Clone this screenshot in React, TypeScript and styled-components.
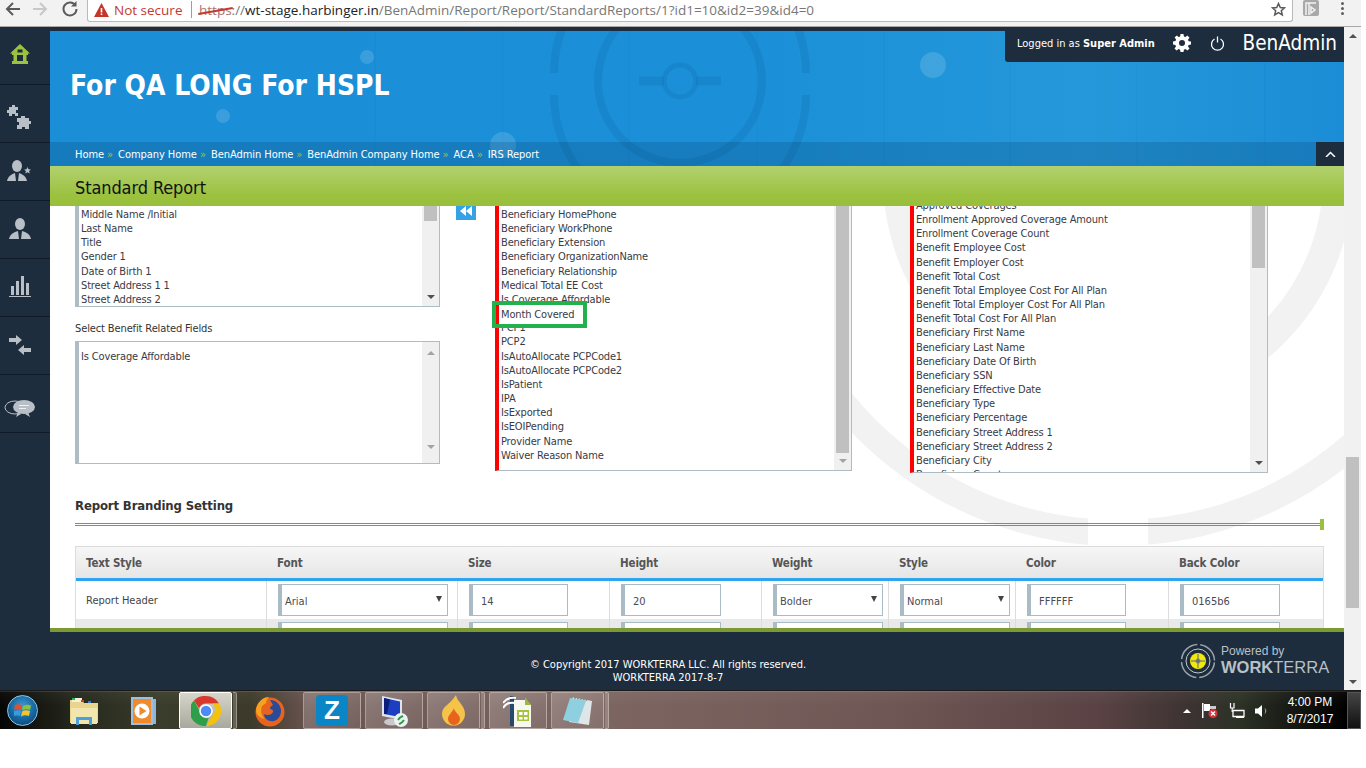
import styled, { createGlobalStyle } from 'styled-components';
import { ReactNode } from 'react';

const uiFont = '"DejaVu Sans Condensed", "DejaVu Sans", sans-serif';

const GlobalStyle = createGlobalStyle`
  html, body {
    margin: 0;
    padding: 0;
    background: #fff;
  }
  body {
    font-family: ${uiFont};
    font-stretch: condensed;
  }
  * {
    box-sizing: border-box;
  }
`;

const leftFields = ['Middle Name /Initial', 'Last Name', 'Title', 'Gender 1', 'Date of Birth 1', 'Street Address 1 1', 'Street Address 2'];

const centerFields = [
  'Beneficiary HomePhone',
  'Beneficiary WorkPhone',
  'Beneficiary Extension',
  'Beneficiary OrganizationName',
  'Beneficiary Relationship',
  'Medical Total EE Cost',
  'Is Coverage Affordable',
  'Month Covered',
  'PCP1',
  'PCP2',
  'IsAutoAllocate PCPCode1',
  'IsAutoAllocate PCPCode2',
  'IsPatient',
  'IPA',
  'IsExported',
  'IsEOIPending',
  'Provider Name',
  'Waiver Reason Name',
];

const rightFields = [
  'Approved Coverages',
  'Enrollment Approved Coverage Amount',
  'Enrollment Coverage Count',
  'Benefit Employee Cost',
  'Benefit Employer Cost',
  'Benefit Total Cost',
  'Benefit Total Employee Cost For All Plan',
  'Benefit Total Employer Cost For All Plan',
  'Benefit Total Cost For All Plan',
  'Beneficiary First Name',
  'Beneficiary Last Name',
  'Beneficiary Date Of Birth',
  'Beneficiary SSN',
  'Beneficiary Effective Date',
  'Beneficiary Type',
  'Beneficiary Percentage',
  'Beneficiary Street Address 1',
  'Beneficiary Street Address 2',
  'Beneficiary City',
  'Beneficiary Country',
];

const crumbs = ['Home', 'Company Home', 'BenAdmin Home', 'BenAdmin Company Home', 'ACA', 'IRS Report'];

const columns = [
  { title: 'Text Style' },
  { title: 'Font', width: 170, value: 'Arial', arrow: true },
  { title: 'Size', width: 99, value: '14' },
  { title: 'Height', width: 100, value: '20' },
  { title: 'Weight', width: 110, value: 'Bolder', arrow: true },
  { title: 'Style', width: 110, value: 'Normal', arrow: true },
  { title: 'Color', width: 99, value: 'FFFFFF' },
  { title: 'Back Color', width: 100, value: '0165b6' },
];

const grey = '#b9bfc6';

// dy: how far the glyph sits off the middle of its 58px row
const navIcons: { dy: number; icon: ReactNode }[] = [
  {
    dy: -2,
    icon: (
      <svg width="24" height="22" viewBox="0 0 24 22" fill="#9ac33f">
        <path d="M12 1 22 10.500H2Z" />
        <path d="M4 10h16v2h-1.500v6H20v3H4v-3h1.500v-6H4Z" />
        <path d="M9 12h6v6H9Z" fill="#1d2d3e" />
        <path d="M9.500 6.500h5v3h-5Z" fill="#1d2d3e" />
      </svg>
    ),
  },
  {
    dy: 3,
    icon: (
      <svg width="28" height="26" viewBox="0 0 28 26" fill={grey}>
        <path d="M3 3h3V1h3v2h3v3h-2v3h2v3H9v-2H6v2H3V9H1V6h2Z" />
        <path d="M11 14h4v-2h4v2h4v3h2v3h-2v5h-4v-2h-3v2h-5v-4h2v-3h-2Z" />
      </svg>
    ),
  },
  {
    dy: -1,
    icon: (
      <svg width="26" height="22" viewBox="0 0 26 22" fill={grey}>
        <ellipse cx="10" cy="6" rx="5" ry="6" />
        <path d="M0 21c1-5 5-7 8-8l1 8Z" />
        <path d="M20 21c-1-5-5-7-8-8l-1 8Z" />
        <path d="M20.500 7l1 2.300 2.500.2-1.900 1.600.6 2.400-2.200-1.300-2.200 1.300.6-2.400-1.900-1.600 2.500-.2Z" />
      </svg>
    ),
  },
  {
    dy: -1,
    icon: (
      <svg width="22" height="22" viewBox="0 0 22 22" fill={grey}>
        <ellipse cx="11" cy="6" rx="5" ry="6" />
        <path d="M0 21c1-5 5-7 9-8l1 8Z" />
        <path d="M22 21c-1-5-5-7-9-8l-1 8Z" />
      </svg>
    ),
  },
  {
    dy: -1,
    icon: (
      <svg width="22" height="22" viewBox="0 0 22 22" fill={grey}>
        <path d="M2 10h3v9H2ZM7 5h3v14H7ZM12 0h3v19h-3ZM17 7h3v12h-3ZM0 20h22v1H0Z" />
      </svg>
    ),
  },
  {
    dy: -1,
    icon: (
      <svg width="22" height="20" viewBox="0 0 22 20" fill={grey}>
        <path d="M0 3h7V0l6 5-6 5V7H0Z" />
        <path d="M22 13h-7v-3l-6 5 6 5v-3h7Z" />
      </svg>
    ),
  },
  {
    dy: 5,
    icon: (
      <svg width="32" height="18" viewBox="0 0 32 18" fill="none">
        <ellipse cx="11" cy="7.500" rx="10" ry="6.500" stroke={grey} strokeWidth="1" />
        <ellipse cx="20" cy="7" rx="11" ry="7" fill={grey} />
        <path d="M14 12l-2 5 5-3ZM24 12l2 5-5-3Z" fill={grey} />
        <path d="M15 5.500h10M15 8.500h7" stroke="#eef1f3" strokeWidth="1" />
      </svg>
    ),
  },
];

export default function App() {
  return (
    <>
      <GlobalStyle />
      <Page>
        <BrowserBar>
          <svg width="20" height="20" viewBox="0 0 20 20" fill="none" stroke="#5a5a5a" strokeWidth="2">
            <path d="M17 9H4M10 3 4 9l6 6" />
          </svg>
          <ForwardIcon width="20" height="20" viewBox="0 0 20 20" fill="none" stroke="#c8c8c8" strokeWidth="2">
            <path d="M2 9h13M9 3l6 6-6 6" />
          </ForwardIcon>
          <ReloadIcon width="18" height="18" viewBox="0 0 18 18" fill="none" stroke="#5a5a5a" strokeWidth="2">
            <path d="M14.500 5.500A6.500 6.500 0 1 0 15.500 9" />
            <path d="M15.500 1v5.500H10" fill="#5a5a5a" stroke="none" />
          </ReloadIcon>
          <Omnibox>
            <svg width="15" height="14" viewBox="0 0 15 14">
              <path d="M7.500 0 15 14H0Z" fill="#c5352a" />
              <path d="M6.700 5h1.600v4.500H6.700ZM6.700 10.500h1.600V12H6.700Z" fill="#fff" />
            </svg>
            <NotSecure>Not secure</NotSecure>
            <OmniDivider />
            <Url>
              <Scheme>https</Scheme>
              ://<UrlHost>wt-stage.harbinger.in</UrlHost>/BenAdmin/Report/Report/StandardReports/1?id1=10&amp;id2=39&amp;id4=0
            </Url>
            <svg width="15" height="15" viewBox="0 0 15 15" fill="none" stroke="#5a5a5a" strokeWidth="1.500">
              <path d="M7.500 1.500 9.300 5.500l4.200.4-3.200 2.800 1 4.200-3.800-2.200-3.800 2.200 1-4.200L1.500 5.900l4.200-.4Z" />
            </svg>
          </Omnibox>
          <ExtensionBadge>
            <svg width="12" height="13" viewBox="0 0 12 13" fill="none" stroke="#f2f2f2" strokeWidth="1.500">
              <path d="M11 1H1v12M4 1v12" />
              <path d="M6 5l4 3-4 3Z" />
            </svg>
          </ExtensionBadge>
          <MenuDots>
            <i />
            <i />
            <i />
          </MenuDots>
        </BrowserBar>

        <Viewport>
          <Sidebar>
            {navIcons.map((item, i) => (
              <NavItem key={i} $dy={item.dy}>
                {item.icon}
              </NavItem>
            ))}
          </Sidebar>

          <Main>
            <TopStrip />
            <UserBox>
              <UserText>
                Logged in as <b>Super Admin</b>
              </UserText>
              <svg width="18" height="18" viewBox="0 0 18 18" fill="#fff">
                <path
                  fillRule="evenodd"
                  d="M7.500 0h3l.4 2.500 1.500.6 2-1.500 2.100 2.100-1.500 2 .6 1.500 2.400.4v3l-2.400.4-.6 1.500 1.500 2-2.100 2.100-2-1.500-1.500.6-.4 2.300h-3l-.4-2.300-1.500-.6-2 1.500-2.100-2.100 1.500-2-.6-1.500L0 10.500v-3l2.500-.4.600-1.500-1.500-2 2.100-2.100 2 1.500 1.500-.6ZM9 6a3 3 0 1 0 0 6 3 3 0 0 0 0-6Z"
                />
              </svg>
              <PowerIcon width="15" height="15" viewBox="0 0 15 15" fill="none" stroke="#fff" strokeWidth="1.300">
                <path d="M4.500 3A6 6 0 1 0 10.500 3" />
                <path d="M7.500 0.500v6" />
              </PowerIcon>
              <AppName>BenAdmin</AppName>
            </UserBox>

            <Hero>
              <HeroArt width="1294" height="135" viewBox="0 0 1294 135" fill="none">
                {[325, 453, 579, 707, 834, 960, 1087, 1215].map((x) => (
                  <path key={x} d="M0 0v135" transform={`translate(${x} 0)`} stroke="#1578b8" strokeOpacity=".14" />
                ))}
                <g stroke="#1679bd" strokeOpacity=".42">
                  <circle cx="630" cy="50" r="16" strokeWidth="5" />
                  <circle cx="630" cy="50" r="82" strokeWidth="8" />
                  <path d="M589 50h25M646 50h25" strokeWidth="9" />
                  <path d="M504 42A126 126 0 0 1 756 42M504 64A126 126 0 0 0 756 64" strokeWidth="8" />
                </g>
                <g fill="#fff" fillOpacity=".14">
                  <circle cx="317" cy="26" r="7" />
                  <circle cx="173" cy="85" r="7" />
                  <circle cx="453" cy="114" r="13" />
                  <circle cx="883" cy="34" r="13" />
                </g>
              </HeroArt>
              <HeroTitle>For QA LONG For HSPL</HeroTitle>
              <Breadcrumbs>
                {crumbs.map((c, i) => (
                  <Crumb key={c}>
                    {c}
                    {i < crumbs.length - 1 && <CrumbSep>»</CrumbSep>}
                  </Crumb>
                ))}
                <CollapseButton>
                  <svg width="11" height="6" viewBox="0 0 11 6" fill="none" stroke="#fff" strokeWidth="1.500">
                    <path d="M1 6l4.500-4.500L10 6" />
                  </svg>
                </CollapseButton>
              </Breadcrumbs>
            </Hero>

            <TitleBar>Standard Report</TitleBar>

            <Content>
              <Watermark width="1294" height="422" viewBox="0 0 1294 422" fill="none" stroke="#f2f2f2">
                <circle cx="1068" cy="-29" r="356" strokeWidth="26" />
                <circle cx="1068" cy="-29" r="220" strokeWidth="30" />
                <path d="M1038 280h60v80h-60Z" fill="#fff" stroke="none" />
              </Watermark>

              <Columns>
                <LeftColumn>
                  <ListBox $h={101} $edge="#aebcc4">
                    <List>
                      {leftFields.map((f) => (
                        <li key={f}>{f}</li>
                      ))}
                    </List>
                    <Track>
                      <Thumb $h={15} />
                      <Arrow />
                    </Track>
                  </ListBox>
                  <FieldLabel>Select Benefit Related Fields</FieldLabel>
                  <ListBox $h={123} $edge="#aebcc4" $closed>
                    <List $top={8}>
                      <li>Is Coverage Affordable</li>
                    </List>
                    <Track $between>
                      <Arrow $up $faint />
                      <Arrow $faint />
                    </Track>
                  </ListBox>
                </LeftColumn>

                <MoveButton>
                  <svg width="14" height="12" viewBox="0 0 14 12" fill="#fff">
                    <path d="M7 0v10L1 5ZM13 0v10L7 5Z" />
                  </svg>
                </MoveButton>

                <CenterColumn>
                  <ListBox $h={265} $edge="#f00">
                    <List>
                      {centerFields.map((f) => (
                        <li key={f}>{f}</li>
                      ))}
                    </List>
                    <Track>
                      <Thumb $h={247} />
                      <Arrow $faint />
                    </Track>
                  </ListBox>
                  <Callout>Month Covered</Callout>
                </CenterColumn>

                <RightColumn>
                  <ListBox $h={267} $edge="#f00">
                    <List $top={-7}>
                      {rightFields.map((f) => (
                        <li key={f}>{f}</li>
                      ))}
                    </List>
                    <Track>
                      <Thumb $h={62} />
                      <Arrow />
                    </Track>
                  </ListBox>
                </RightColumn>
              </Columns>

              <SectionTitle>Report Branding Setting</SectionTitle>
              <SectionRule />

              <BrandingTable>
                <HeaderRow>
                  {columns.map((c) => (
                    <HeaderCell key={c.title}>{c.title}</HeaderCell>
                  ))}
                </HeaderRow>
                <BodyRow>
                  {columns.map((c) => (
                    <BodyCell key={c.title}>
                      {c.width ? (
                        <Field $w={c.width} $pad={c.arrow ? 3 : 8}>
                          {c.value}
                          {c.arrow && <Caret />}
                        </Field>
                      ) : (
                        'Report Header'
                      )}
                    </BodyCell>
                  ))}
                </BodyRow>
                <BodyRow $shaded>
                  {columns.map((c) => (
                    <BodyCell key={c.title}>{c.width && <Field $w={c.width} $pad={8} />}</BodyCell>
                  ))}
                </BodyRow>
              </BrandingTable>
            </Content>

            <Footer>
              <Copyright>
                © Copyright 2017 WORKTERRA LLC. All rights reserved.
                <br />
                WORKTERRA 2017-8-7
              </Copyright>
              <PoweredBy>
                <svg width="36" height="36" viewBox="0 0 36 36" fill="none">
                  <circle cx="18" cy="18" r="16.500" stroke="#9aa3ab" strokeWidth="1.500" strokeDasharray="23 3" strokeDashoffset="-1.500" />
                  <circle cx="18" cy="18" r="12" stroke="#c4c8cb" strokeWidth="1" />
                  <circle cx="18" cy="18" r="8" fill="#f2e70f" />
                  <circle cx="18" cy="18" r="2.500" fill="#8a8f70" />
                  <path d="M18 11v14M11 18h14" stroke="#5d6470" strokeWidth="1" />
                </svg>
                <PoweredText>
                  <small>Powered by</small>
                  <Brand>
                    <b>WORK</b>TERRA
                  </Brand>
                </PoweredText>
              </PoweredBy>
            </Footer>
          </Main>

          <PageScrollbar>
            <PageArrow $up />
            <PageThumb />
            <PageArrow />
          </PageScrollbar>
        </Viewport>

        <Taskbar>
          <StartOrb>
            <svg width="18" height="16" viewBox="0 0 18 16">
              <path d="M1 2c2.500-1 5-1 7 .5L7 7C5 6 3 6 0 7Z" fill="#e0502e" />
              <path d="M9 3c2-1 5-2 8-.5L16 7c-3-1-5-1-8 .5Z" fill="#8cc23c" />
              <path d="M0 8c3-1 5-1 7 0l-1 5c-2-1-4-1-7 .5Z" fill="#3a9ae0" />
              <path d="M8 8.500c3-1.500 5-1.500 8-.5l-1 5c-3-1-5-1-8 .5Z" fill="#f2c52e" />
            </svg>
          </StartOrb>
          <PlainSlot $w={56}>
            <svg width="32" height="30" viewBox="0 0 32 30">
              <path d="M2 4h12l2 3h14v20H2Z" fill="#e8d48c" />
              <path d="M4 2h10v4H4Z" fill="#f5f0d8" />
              <path d="M4 2h3v2H4Z" fill="#2db34a" />
              <path d="M13 4h3v2h-3Z" fill="#d63a2f" />
              <path d="M20 5h3v2h-3Z" fill="#2f7fd6" />
              <path d="M3 12h26v16H3Z" fill="#f2e6b0" />
              <path d="M8 21h16v8h-3v-5H11v5H8Z" fill="#4aa0d8" />
            </svg>
          </PlainSlot>
          <PlainSlot $w={63}>
            <svg width="28" height="30" viewBox="0 0 28 30">
              <path d="M6 3h20v25H6Z" fill="#8fb6d8" />
              <path d="M2 2h20v26H2Z" fill="#f08a2c" stroke="#9cc0de" strokeWidth="2" />
              <circle cx="12" cy="15" r="7.500" fill="#fff" />
              <path d="M9.500 10.500v9l7-4.500Z" fill="#f08a2c" />
            </svg>
          </PlainSlot>
          <TaskButton $w={53} $active>
            <svg width="30" height="30" viewBox="0 0 30 30">
              <path d="M15 0a15 15 0 0 1 13 7.500H15a7.500 7.500 0 0 0-7 4.800L3 4.500A15 15 0 0 1 15 0Z" fill="#d8392b" />
              <path d="M28 7.500A15 15 0 0 1 15 30l6.500-11a7.500 7.500 0 0 0 0-11.500Z" fill="#f4c20d" />
              <path d="M3 4.500l5.500 10a7.500 7.500 0 0 0 9 7.500L15 30A15 15 0 0 1 3 4.500Z" fill="#2f9e48" />
              <circle cx="15" cy="15" r="6" fill="#4c8bf5" stroke="#fff" strokeWidth="1.500" />
            </svg>
          </TaskButton>
          <Sliver />
          <PlainSlot $w={62} $pl={4}>
            <svg width="30" height="32" viewBox="0 0 30 32">
              <circle cx="15" cy="17" r="14.500" fill="#e8641e" />
              <path d="M15 5a11 11 0 0 1 11 11c0 5-3 9-7 10-5 1-10-2-10-7 3 2 8 1 9-2 1-2-2-3-3-3 0-2 1-3 3-4-1-2-2-3-3-5Z" fill="#2a4a9a" />
              <path d="M1 15c1-7 6-13 13-13-2 2-3 4-3 6l-4 3c-1 4-2 8 3 13-5-1-9-4-9-9Z" fill="#f6a21c" />
            </svg>
          </PlainSlot>
          <TaskButton $w={58}>
            <ZBadge>Z</ZBadge>
          </TaskButton>
          <TaskButton $w={58}>
            <svg width="30" height="32" viewBox="0 0 30 32">
              <path d="M3 1l20 4v20L3 21Z" fill="#dfe5ee" />
              <path d="M5 3l16 3.500V22L5 19Z" fill="#1c3ec0" />
              <path d="M5 3l6 1.500L8 19H5Z" fill="#0b1d78" />
              <ellipse cx="13" cy="27" rx="8" ry="3.500" fill="#c7c9cc" />
              <circle cx="22" cy="25" r="7" fill="#eef1f2" />
              <path d="M19 25c2-3 3-3 5-4M25 25c-2 3-3 3-5 4" stroke="#2a9a4a" strokeWidth="2" fill="none" />
            </svg>
          </TaskButton>
          <TaskButton $w={53}>
            <svg width="24" height="32" viewBox="0 0 24 32">
              <path d="M14 0c1 7 9 10 9 19a11.500 11.500 0 0 1-23 0C0 11 8 10 14 0Z" fill="#f6c34a" />
              <path d="M12 13c0 4 6 6 6 11a6 6 0 0 1-12 0c0-4 4-6 6-11Z" fill="#e8641e" />
            </svg>
          </TaskButton>
          <Sliver />
          <TaskButton $w={58}>
            <svg width="30" height="34" viewBox="0 0 30 34">
              <path d="M7 2h4v30H7Z" fill="#26486a" />
              <path d="M11 6h12l5 5v22H11Z" fill="#f7f7f2" />
              <path d="M22 3l6 8h-6Z" fill="#9ab83a" />
              <path d="M14 16h12v11H14Z" fill="#a8c23a" />
              <path d="M16 18h3.500v3H16ZM21 18h3.500v3H21ZM16 23h3.500v2.500H16ZM21 23h3.500v2.500H21Z" fill="#fff" />
              <path d="M0 14c3-5 7-6 12-5M0 9c3-4 7-6 13-5" stroke="#fff" strokeWidth="2" fill="none" />
            </svg>
          </TaskButton>
          <TaskButton $w={53}>
            <svg width="32" height="32" viewBox="0 0 32 32">
              <path d="M10 2l20 4-3 24-20-3Z" fill="#dfe6e8" />
              <path d="M8 3l16 3-8 22-15-3Z" fill="#8fd0e0" />
              <path d="M9 2l16 3" stroke="#888" strokeWidth="2" strokeDasharray="2 1" />
            </svg>
          </TaskButton>
          <Sliver />

          <Tray>
            <TrayCaret />
            <svg width="18" height="16" viewBox="0 0 18 16">
              <path d="M1 0h1.500v15H1ZM3 1h6v7H3Z" fill="#fff" />
              <path d="M9 3h6v3H9Z" fill="#c9cdd0" />
              <circle cx="12" cy="10.500" r="4.500" fill="#d8343a" />
              <path d="M10 8.500l4 4M14 8.500l-4 4" stroke="#fff" strokeWidth="1.300" />
            </svg>
            <svg width="16" height="15" viewBox="0 0 16 15" fill="none" stroke="#fff">
              <path d="M4 7.500h11v6H4ZM7 14.500h8" strokeWidth="1.300" />
              <path d="M1.500 0v5M5 0v5M1 5h4.500M3.200 5v4" strokeWidth="1.200" />
            </svg>
            <svg width="13" height="14" viewBox="0 0 13 14" fill="#fff">
              <path d="M0 4.500h3L7 1v12L3 9.500H0Z" />
              <path d="M10 4.500c1 1.500 1 3.500 0 5" fill="none" stroke="#aaa" />
            </svg>
            <Clock>
              4:00 PM
              <br />
              8/7/2017
            </Clock>
            <ShowDesktop />
          </Tray>
        </Taskbar>
      </Page>
    </>
  );
}

const Page = styled.div`
  width: 1361px;
  height: 729px;
  display: flex;
  flex-direction: column;
  overflow: hidden;
`;

const BrowserBar = styled.div`
  height: 27px;
  flex: none;
  display: flex;
  align-items: flex-start;
  padding: 0 0 0 3px;
  background: #f2f2f2;
  border-bottom: 1px solid #a8a8a8;
`;

const ForwardIcon = styled.svg`
  margin-left: 8px;
`;

const ReloadIcon = styled.svg`
  margin: 0 8px 0 10px;
`;

const Omnibox = styled.div`
  width: 1206px;
  height: 22px;
  display: flex;
  align-items: center;
  gap: 5px;
  padding: 0 6px 2px 6px;
  background: #fff;
  border: 1px solid #b9b9b9;
  border-top: none;
  border-radius: 0 0 3px 3px;
  font-family: 'Open Sans', sans-serif;
  font-stretch: normal;
  font-size: 13.500px;
`;

const NotSecure = styled.span`
  color: #c5392e;
  width: 72px;
  white-space: nowrap;
`;

const OmniDivider = styled.span`
  width: 1px;
  height: 17px;
  background: #9d9d9d;
  margin-right: 2px;
`;

const Url = styled.span`
  flex: 1;
  color: #777;
  white-space: nowrap;
`;

const Scheme = styled.span`
  position: relative;
  color: #a9756f;
  &::after {
    content: '';
    position: absolute;
    left: -1px;
    right: -1px;
    top: 9px;
    height: 2px;
    background: #c5392e;
    transform: rotate(-10deg);
  }
`;

const UrlHost = styled.span`
  color: #222;
`;

const ExtensionBadge = styled.div`
  width: 16px;
  height: 16px;
  margin-left: 10px;
  background: #a9a9a9;
  border-radius: 2px;
  display: flex;
  align-items: center;
  justify-content: center;
`;

const MenuDots = styled.div`
  display: flex;
  flex-direction: column;
  gap: 2px;
  margin: 2px 0 0 22px;
  i {
    width: 3px;
    height: 3px;
    background: #5f5f5f;
    border-radius: 50%;
  }
`;

const Viewport = styled.div`
  flex: none;
  height: 663px;
  display: flex;
`;

const Sidebar = styled.div`
  width: 50px;
  flex: none;
  background: #1d2d3e;
`;

const NavItem = styled.div<{ $dy: number }>`
  height: 58px;
  padding-right: 10px;
  display: flex;
  align-items: center;
  justify-content: center;
  border-bottom: 1px solid #111b27;
  > svg {
    margin-top: ${(p) => p.$dy * 2}px;
  }
`;

const Main = styled.div`
  position: relative;
  width: 1294px;
  flex: none;
  display: flex;
  flex-direction: column;
`;

const TopStrip = styled.div`
  height: 4px;
  flex: none;
  background: #1d2d3e;
`;

const UserBox = styled.div`
  position: absolute;
  top: 0;
  right: 0;
  z-index: 3;
  width: 339px;
  height: 35px;
  display: flex;
  align-items: center;
  padding: 0 7px 3px 12px;
  background: #1d2d3e;
  border-bottom-left-radius: 3px;
  color: #fff;
`;

const UserText = styled.span`
  width: 156px;
  font-size: 11px;
  white-space: nowrap;
  b {
    font-weight: 700;
  }
`;

const PowerIcon = styled.svg`
  margin-left: 19px;
`;

const AppName = styled.span`
  margin-left: auto;
  font-size: 20.500px;
`;

const Hero = styled.div`
  position: relative;
  height: 135px;
  flex: none;
  display: flex;
  flex-direction: column;
  overflow: hidden;
  background: linear-gradient(90deg, #1a8ed7 0%, #1b90d8 55%, #2598da 80%, #1b8dd6 100%);
`;

const HeroArt = styled.svg`
  position: absolute;
  inset: 0;
`;

const HeroTitle = styled.h1`
  position: relative;
  flex: 1;
  margin: 0;
  padding: 35px 0 0 20px;
  font-size: 28px;
  line-height: 40px;
  font-weight: 700;
  color: #fff;
`;

const Breadcrumbs = styled.div`
  position: relative;
  height: 24px;
  flex: none;
  display: flex;
  align-items: center;
  padding-left: 25px;
  background: rgba(10, 60, 100, 0.22);
  font-size: 11px;
  letter-spacing: -0.05px;
  color: #fff;
`;

const Crumb = styled.span`
  white-space: nowrap;
`;

const CrumbSep = styled.span`
  margin: 0 5px 0 3px;
  color: #9ac33f;
`;

const CollapseButton = styled.div`
  width: 28px;
  height: 24px;
  margin-left: auto;
  display: flex;
  align-items: center;
  justify-content: center;
  background: #1d2d3e;
`;

const TitleBar = styled.div`
  height: 40px;
  flex: none;
  padding: 10px 0 0 25px;
  background: linear-gradient(180deg, #b2d16e 0%, #9bc13f 75%, #98bf3c 100%);
  font-size: 18px;
  letter-spacing: -0.1px;
  line-height: 24px;
  color: #111;
`;

const Content = styled.div`
  position: relative;
  height: 422px;
  flex: none;
  overflow: hidden;
  padding: 0 20px 0 25px;
  background: #fff;
`;

const Watermark = styled.svg`
  position: absolute;
  inset: 0;
`;

const Columns = styled.div`
  position: relative;
  height: 292px;
  display: flex;
  align-items: flex-start;
`;

const LeftColumn = styled.div`
  width: 365px;
  flex: none;
  display: flex;
  flex-direction: column;
`;

const CenterColumn = styled.div`
  position: relative;
  width: 357px;
  flex: none;
  margin-right: 58px;
`;

const RightColumn = styled.div`
  width: 358px;
  flex: none;
`;

const ListBox = styled.div<{ $h: number; $edge: string; $closed?: boolean }>`
  height: ${(p) => p.$h}px;
  display: flex;
  background: #fff;
  border: 1px solid #aebcc4;
  border-top: ${(p) => (p.$closed ? '1px solid #aebcc4' : 'none')};
  border-left: 4px solid ${(p) => p.$edge};
  overflow: hidden;
`;

const List = styled.ul<{ $top?: number }>`
  flex: 1;
  list-style: none;
  margin: ${(p) => p.$top ?? 2}px 0 0;
  padding: 0 0 0 2px;
  font-size: 11px;
  letter-spacing: -0.15px;
  line-height: 14.150px;
  color: #3a3a44;
  li {
    white-space: nowrap;
  }
`;

const Track = styled.div<{ $between?: boolean }>`
  width: 17px;
  flex: none;
  display: flex;
  flex-direction: column;
  align-items: center;
  justify-content: ${(p) => (p.$between ? 'space-between' : 'flex-start')};
  padding: ${(p) => (p.$between ? '9px 0 7px' : '0')};
  background: #f0f0f0;
`;

const Thumb = styled.div<{ $h: number }>`
  width: 13px;
  height: ${(p) => p.$h}px;
  background: #c0c0c0;
`;

const Arrow = styled.div<{ $up?: boolean; $faint?: boolean }>`
  width: 0;
  height: 0;
  margin-top: ${(p) => (p.$up ? 0 : 'auto')};
  margin-bottom: ${(p) => (p.$up ? 0 : '7px')};
  border-left: 4px solid transparent;
  border-right: 4px solid transparent;
  ${(p) => (p.$up ? 'border-bottom' : 'border-top')}: 4px solid ${(p) => (p.$faint ? '#a3a3a3' : '#505050')};
`;

const FieldLabel = styled.div`
  margin: 15px 0 5px;
  font-size: 11px;
  letter-spacing: -0.12px;
  line-height: 14px;
  color: #333;
`;

const MoveButton = styled.div`
  width: 20px;
  height: 14px;
  flex: none;
  margin: 0 19px 0 16px;
  display: flex;
  align-items: flex-start;
  justify-content: center;
  background: #35a2e6;
`;

const Callout = styled.div`
  position: absolute;
  left: -3px;
  top: 95px;
  width: 95px;
  height: 27px;
  padding-left: 5px;
  border: 4px solid #22b14c;
  background: linear-gradient(90deg, #f00 0 3px, #fff 3px);
  font-size: 11px;
  letter-spacing: -0.15px;
  line-height: 19px;
  color: #3a3a44;
`;

const SectionTitle = styled.div`
  position: relative;
  font-size: 13px;
  letter-spacing: -0.13px;
  font-weight: 700;
  line-height: 16px;
  color: #333;
`;

const SectionRule = styled.div`
  position: relative;
  height: 3px;
  margin-top: 9px;
  border-top: 1px solid #7b9a3c;
  border-bottom: 1px solid #7b9a3c;
  &::after {
    content: '';
    position: absolute;
    right: 0;
    top: -5px;
    width: 4px;
    height: 11px;
    background: #9bc13c;
  }
`;

const BrandingTable = styled.div`
  position: relative;
  margin-top: 20px;
  border: 1px solid #dcdcdc;
  border-bottom: none;
  background: #fff;
`;

const grid = `
  display: grid;
  grid-template-columns: 191px 191px 152px 152px 127px 127px 153px 154px;
`;

const HeaderRow = styled.div`
  ${grid}
  height: 34px;
  background: linear-gradient(180deg, #f6f6f6, #e6e6e6);
  border-bottom: 3px solid #2fa4ee;
`;

const HeaderCell = styled.div`
  padding: 1px 0 0 10px;
  font-size: 11.500px;
  letter-spacing: -0.15px;
  font-weight: 700;
  line-height: 31px;
  color: #555;
`;

const BodyRow = styled.div<{ $shaded?: boolean }>`
  ${grid}
  height: 38px;
  background: ${(p) => (p.$shaded ? '#e9e9e9' : '#fff')};
`;

const BodyCell = styled.div`
  display: flex;
  align-items: center;
  padding-left: 10px;
  border-right: 1px solid #dcdcdc;
  font-size: 11px;
  color: #444;
  &:last-child {
    border-right: none;
  }
`;

const Field = styled.div<{ $w: number; $pad: number }>`
  position: relative;
  width: ${(p) => p.$w}px;
  height: 32px;
  margin-left: 1px;
  padding: 2px 0 0 ${(p) => p.$pad}px;
  display: flex;
  align-items: center;
  background: #fff;
  border: 1px solid #a9bcc6;
  border-left-width: 4px;
  font-size: 11px;
  color: #4a4a55;
`;

const Caret = styled.i`
  position: absolute;
  right: 5px;
  top: 11px;
  border-left: 3.500px solid transparent;
  border-right: 3.500px solid transparent;
  border-top: 6px solid #444;
`;

const Footer = styled.div`
  flex: 1;
  display: flex;
  align-items: flex-start;
  background: #1d2d3e;
  border-top: 4px solid #7b9a34;
`;

const Copyright = styled.div`
  flex: 1;
  padding: 26px 0 0 106px;
  text-align: center;
  font-size: 11px;
  line-height: 13px;
  color: #fff;
`;

const PoweredBy = styled.div`
  display: flex;
  align-items: center;
  gap: 5px;
  width: 164px;
  margin-top: 11px;
  color: #b9c0c6;
`;

const PoweredText = styled.div`
  display: flex;
  flex-direction: column;
  small {
    font-family: 'Liberation Sans', sans-serif;
    font-size: 12px;
    line-height: 13px;
  }
`;

const Brand = styled.span`
  font-family: 'Liberation Sans', sans-serif;
  font-size: 16.500px;
  line-height: 19px;
  white-space: nowrap;
  b {
    font-weight: 700;
  }
`;

const PageScrollbar = styled.div`
  width: 17px;
  flex: none;
  display: flex;
  flex-direction: column;
  align-items: center;
  background: #f1f1f1;
`;

const PageArrow = styled.div<{ $up?: boolean }>`
  width: 0;
  height: 0;
  margin-top: ${(p) => (p.$up ? '7px' : '72px')};
  border-left: 4px solid transparent;
  border-right: 4px solid transparent;
  ${(p) => (p.$up ? 'border-bottom' : 'border-top')}: 4px solid #505050;
`;

const PageThumb = styled.div`
  width: 13px;
  height: 151px;
  margin-top: 419px;
  background: #c0c0c0;
`;

const Taskbar = styled.div`
  height: 39px;
  flex: none;
  display: flex;
  align-items: stretch;
  padding-top: 1px;
  border-top: 1px solid #1a1a1a;
  background:
    linear-gradient(180deg, rgba(255, 255, 255, 0.2) 0, rgba(255, 255, 255, 0.04) 4%, rgba(0, 0, 0, 0) 40%),
    linear-gradient(
      90deg,
      #050505 0,
      #23261b 70px,
      #3a3d2b 160px,
      #3c3a2a 250px,
      #6a5450 310px,
      #7d6662 600px,
      #6e5654 900px,
      #5a4244 1100px,
      #3b3331 1190px,
      #2c3226 1240px,
      #000 1345px
    );
`;

const StartOrb = styled.div`
  width: 31px;
  height: 31px;
  margin: 3px 18px 0 7px;
  flex: none;
  display: flex;
  align-items: center;
  justify-content: center;
  border-radius: 50%;
  border: 1px solid #8fc6ea;
  background: radial-gradient(circle at 50% 35%, #3f97cf 0, #14659e 55%, #0a3a66 100%);
`;

const PlainSlot = styled.div<{ $w: number; $pl?: number }>`
  width: ${(p) => p.$w}px;
  flex: none;
  padding-left: ${(p) => p.$pl ?? 0}px;
  display: flex;
  align-items: center;
  justify-content: center;
`;

const TaskButton = styled.div<{ $w: number; $active?: boolean }>`
  width: ${(p) => p.$w}px;
  flex: none;
  margin-left: 4px;
  display: flex;
  align-items: center;
  justify-content: center;
  border: 1px solid ${(p) => (p.$active ? '#fff' : 'rgba(220, 210, 205, 0.5)')};
  border-radius: 2px;
  background: ${(p) =>
    p.$active
      ? 'linear-gradient(180deg, #d5d5cb, #a8a89c)'
      : 'linear-gradient(135deg, rgba(255,255,255,.22), rgba(255,255,255,.06))'};
`;

const Sliver = styled.div`
  width: 4px;
  flex: none;
  margin-left: 1px;
  border: 1px solid rgba(220, 210, 205, 0.45);
  border-left: none;
  border-radius: 0 2px 2px 0;
  background: rgba(255, 255, 255, 0.2);
`;

const ZBadge = styled.div`
  width: 32px;
  height: 31px;
  border-radius: 4px;
  background: #0a86c7;
  color: #fff;
  text-align: center;
  font-family: 'Liberation Sans', sans-serif;
  font-size: 26px;
  font-weight: 700;
  line-height: 31px;
`;

const Tray = styled.div`
  margin-left: auto;
  display: flex;
  align-items: center;
  gap: 10px;
  color: #fff;
`;

const TrayCaret = styled.i`
  border-left: 4px solid transparent;
  border-right: 4px solid transparent;
  border-bottom: 4px solid #fff;
`;

const Clock = styled.div`
  width: 64px;
  text-align: center;
  font-family: 'Liberation Sans', sans-serif;
  font-size: 12px;
  line-height: 17px;
`;

const ShowDesktop = styled.div`
  width: 14px;
  height: 37px;
  margin-left: -5px;
  border: 1px solid #555;
  background: linear-gradient(180deg, #444, #111);
`;
